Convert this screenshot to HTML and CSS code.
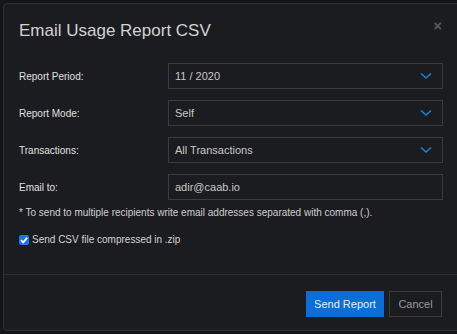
FILE: index.html
```html
<!DOCTYPE html>
<html>
<head>
<meta charset="utf-8">
<link rel="stylesheet" href="styles.css">
</head>
<body>
<div class="backdrop">
  <div class="modal">
    <div class="modal-header">
      <h1 class="modal-title">Email Usage Report CSV</h1>
      <span class="close">&times;</span>
    </div>
    <div class="modal-body">
      <div class="row">
        <label class="label">Report Period:</label>
        <div class="field select"><span>11 / 2020</span>
          <svg class="chev" width="12" height="8" viewBox="0 0 12 8"><path d="M1 1.5 L6 6 L11 1.5" fill="none" stroke="#1f7fd6" stroke-width="1.6"/></svg>
        </div>
      </div>
      <div class="row">
        <label class="label">Report Mode:</label>
        <div class="field select"><span>Self</span>
          <svg class="chev" width="12" height="8" viewBox="0 0 12 8"><path d="M1 1.5 L6 6 L11 1.5" fill="none" stroke="#1f7fd6" stroke-width="1.6"/></svg>
        </div>
      </div>
      <div class="row">
        <label class="label">Transactions:</label>
        <div class="field select"><span>All Transactions</span>
          <svg class="chev" width="12" height="8" viewBox="0 0 12 8"><path d="M1 1.5 L6 6 L11 1.5" fill="none" stroke="#1f7fd6" stroke-width="1.6"/></svg>
        </div>
      </div>
      <div class="row">
        <label class="label">Email to:</label>
        <div class="field"><span>adir@caab.io</span></div>
      </div>
      <p class="note">* To send to multiple recipients write email addresses separated with comma (,).</p>
      <label class="check">
        <span class="box"><svg width="10" height="10" viewBox="0 0 10 10"><path d="M2 5.2 L4.2 7.4 L8.2 2.6" fill="none" stroke="#fff" stroke-width="1.8"/></svg></span>
        Send CSV file compressed in .zip
      </label>
    </div>
    <div class="modal-footer">
      <button class="btn primary">Send Report</button>
      <button class="btn secondary">Cancel</button>
    </div>
  </div>
</div>
</body>
</html>
```
FILE: styles.css
```css
html, body {
  margin: 0;
  padding: 0;
  background: #141518;
  font-family: "Liberation Sans", Arial, sans-serif;
}
.backdrop {
  width: 457px;
  height: 334px;
  padding: 3px 0 0 3px;
  box-sizing: border-box;
  overflow: hidden;
}
.modal {
  width: 470px;
  height: 328px;
  box-sizing: border-box;
  background: #1b1c1f;
  border: 1px solid #2e2f33;
  border-radius: 4px;
  display: flex;
  flex-direction: column;
}
.modal-header {
  display: flex;
  justify-content: space-between;
  align-items: flex-start;
  padding: 16px 0 0 15px;
  height: 41px;
  box-sizing: border-box;
}
.modal-title {
  margin: 0;
  font-size: 17px;
  font-weight: normal;
  color: #d2d2d2;
  line-height: 22px;
}
.close {
  color: #5a5b5e;
  font-size: 15px;
  font-weight: bold;
  margin: -2px 30px 0 0;
  line-height: 16px;
}
.modal-body {
  padding: 18px 15px 0 15px;
  flex: 1;
}
.row {
  display: flex;
  align-items: center;
  height: 26px;
  margin-bottom: 11px;
}
.label {
  width: 149px;
  font-size: 10px;
  color: #e0e0e0;
  font-weight: normal;
}
.field {
  width: 275px;
  height: 26px;
  box-sizing: border-box;
  border: 1px solid #3b3c40;
  display: flex;
  align-items: center;
  justify-content: space-between;
  padding: 0 10px 0 6px;
  font-size: 11px;
  color: #c8c8c8;
}
.note {
  margin: -4px 0 0 0;
  font-size: 10px;
  color: #cfcfcf;
}
.check {
  display: flex;
  align-items: center;
  gap: 3px;
  margin-top: 16px;
  font-size: 10px;
  color: #d4d4d4;
}
.box {
  width: 10px;
  height: 10px;
  background: #1a73e8;
  border-radius: 2px;
  display: flex;
  align-items: center;
  justify-content: center;
}
.modal-footer {
  border-top: 1px solid #2e2f33;
  height: 56px;
  box-sizing: border-box;
  display: flex;
  justify-content: flex-start;
  align-items: center;
  padding: 2px 0 0 302px;
  gap: 5px;
}
.btn {
  height: 26px;
  font-family: "Liberation Sans", Arial, sans-serif;
  font-size: 11px;
  padding: 0;
  border-radius: 0;
  white-space: nowrap;
}
.primary {
  background: #0b6dd8;
  border: 1px solid #0b6dd8;
  color: #e8eef7;
  width: 78px;
}
.secondary {
  background: transparent;
  border: 1px solid #3b3c40;
  color: #9a9a9a;
  width: 53px;
}
```
